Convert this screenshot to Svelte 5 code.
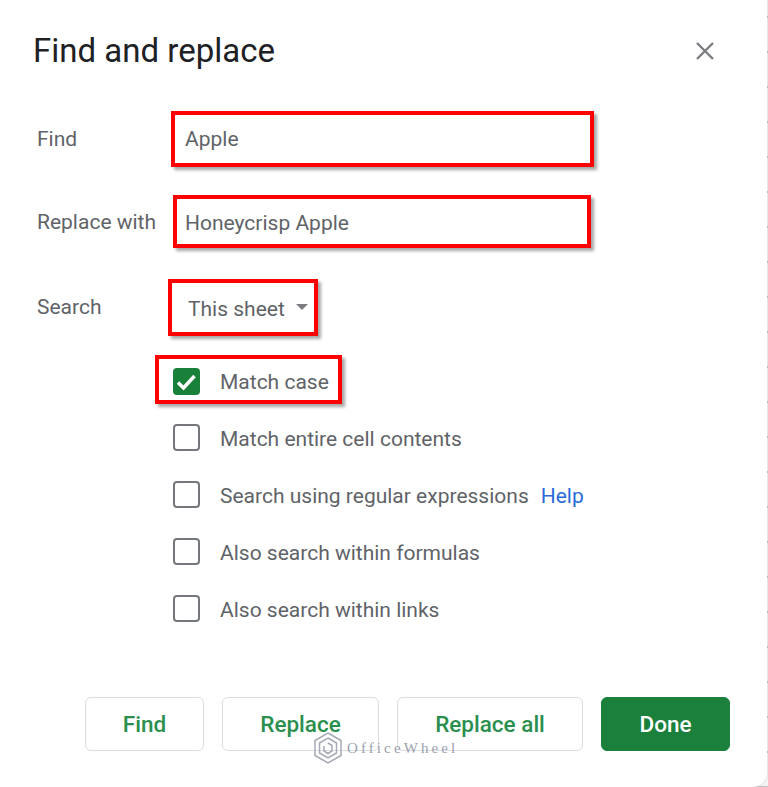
<script>
	const options = [
		{ label: 'Match case', checked: true, marked: true },
		{ label: 'Match entire cell contents' },
		{ label: 'Search using regular expressions', help: true },
		{ label: 'Also search within formulas' },
		{ label: 'Also search within links' }
	];
</script>

<div class="dialog">
	<header class="head">
		<h1>Find and replace</h1>
		<svg class="close" viewBox="0 0 18 18" width="18" height="18" aria-label="Close">
			<path d="M1 1 17 17M17 1 1 17" />
		</svg>
	</header>

	<div class="form">
		<div class="row first">
			<span class="label">Find</span>
			<div class="field find">Apple</div>
		</div>
		<div class="row second">
			<span class="label">Replace with</span>
			<div class="field replace">Honeycrisp Apple</div>
		</div>
		<div class="row third">
			<span class="label">Search</span>
			<div class="select">
				This sheet
				<span class="caret"></span>
			</div>
		</div>
	</div>

	<ul class="options">
		{#each options as opt}
			<li class:marked={opt.marked}>
				<span class="box" class:checked={opt.checked}>
					{#if opt.checked}
						<svg viewBox="0 0 27 27" width="27" height="27">
							<path d="M5 14.500 10.500 20 21.500 8" />
						</svg>
					{/if}
				</span>
				<span class="text">{opt.label}</span>
				{#if opt.help}<a class="help" href="#help">Help</a>{/if}
			</li>
		{/each}
	</ul>

	<footer class="actions">
		<button class="btn b-find">Find</button>
		<button class="btn b-replace">Replace</button>
		<button class="btn b-all">Replace all</button>
		<button class="btn done">Done</button>
	</footer>

	<div class="watermark">
		<svg viewBox="0 0 30 32" width="30" height="32">
			<path d="M15 1 28 8.500V23.500L15 31 2 23.500V8.500Z" />
			<path d="M15 6 23.500 11V21L15 26 6.500 21V11Z" />
			<path d="M15 11 19 13.500V19L15 21.500 11 19V14" />
		</svg>
		<span>OfficeWheel</span>
	</div>
</div>

<style>
	:global(body) {
		margin: 0;
		/* grid rows of the sheet showing behind the dialog */
		background: repeating-linear-gradient(to bottom, #f4f4f4 0 16px, #c4c4c4 16px 18px, #f4f4f4 18px 35px);
	}

	.dialog {
		position: relative;
		box-sizing: border-box;
		width: 767px;
		height: 787px;
		background: #fff;
		border-bottom-right-radius: 14px;
		box-shadow: 0 0 2px rgba(0, 0, 0, 0.2);
		font-family: Roboto, "Liberation Sans", sans-serif;
		color: #5f6368;
		overflow: hidden;
	}

	.head {
		display: flex;
		justify-content: space-between;
		align-items: center;
		padding: 32px 53px 0 33px;
		height: 38px;
	}

	h1 {
		margin: 0;
		font-size: 33px;
		font-weight: 400;
		color: #202124;
		line-height: 38px;
	}

	.close {
		fill: none;
		stroke: #7a7c80;
		stroke-width: 2.4;
	}

	.form {
		padding: 41px 0 0 37px;
	}

	.row {
		display: flex;
		align-items: center;
		font-size: 21px;
	}

	.label {
		width: 134px;
		flex: none;
	}

	.third .label {
		padding-bottom: 2px;
	}

	.field,
	.select {
		box-sizing: border-box;
		border: 4px solid #f00;
		box-shadow: 3px 3px 3px rgba(0, 0, 0, 0.35);
		color: #5f6368;
		display: flex;
		align-items: center;
	}

	.field {
		height: 56px;
		padding-left: 10px;
	}

	.find {
		width: 423px;
	}

	.replace {
		width: 418px;
		height: 53px;
		margin-left: 2px;
		padding-left: 8px;
		padding-top: 2px;
	}

	.second {
		margin-top: 28px;
	}

	.third {
		margin-top: 31px;
	}

	.select {
		width: 150px;
		height: 57px;
		margin-left: -3px;
		padding-left: 16px;
		padding-top: 2px;
	}

	.caret {
		margin-left: 11px;
		margin-top: -3px;
		border-left: 6px solid transparent;
		border-right: 6px solid transparent;
		border-top: 6px solid #7a7c80;
	}

	.options {
		list-style: none;
		margin: 19px 0 0 155px;
		padding: 0;
		font-size: 21px;
	}

	.options li {
		display: flex;
		align-items: center;
		width: 187px;
		height: 51px;
		padding-left: 18px;
		margin-bottom: 6px;
		white-space: nowrap;
	}

	.options li.marked {
		box-sizing: border-box;
		width: 187px;
		height: 49px;
		margin-bottom: 8px;
		border: 4px solid #f00;
		padding: 4px 0 0 14px;
		box-shadow: 3px 3px 3px rgba(0, 0, 0, 0.35);
	}

	.box {
		box-sizing: border-box;
		flex: none;
		width: 27px;
		height: 27px;
		border: 2.500px solid #74777b;
		border-radius: 4px;
		margin-right: 20px;
	}

	.box.checked {
		background: #188038;
		border: none;
	}

	.box svg {
		display: block;
		fill: none;
		stroke: #fff;
		stroke-width: 3.5;
	}

	.text,
	.help {
		padding-top: 2px;
	}

	.marked .text {
		padding-top: 0;
	}

	.help {
		margin-left: 12px;
		color: #2a6bd8;
		text-decoration: none;
	}

	.actions {
		position: absolute;
		left: 85px;
		top: 697px;
		display: flex;
		gap: 18px;
	}

	.btn {
		box-sizing: border-box;
		height: 54px;
		border: 1.500px solid #dadce0;
		border-radius: 6px;
		background: #fff;
		color: #2a8f4e;
		font-family: inherit;
		font-size: 22.5px;
		font-weight: 500;
		padding-bottom: 2px;
	}

	.b-find { width: 119px; }
	.b-replace { width: 157px; }
	.b-all { width: 186px; }

	.done {
		width: 129px;
		background: #1a803c;
		border-color: #1a803c;
		color: #fff;
	}

	.watermark {
		position: absolute;
		left: 313px;
		top: 732px;
		display: flex;
		align-items: center;
		gap: 4px;
		pointer-events: none;
	}

	.watermark svg {
		fill: none;
		stroke: #a5a9b5;
		stroke-width: 1.500;
	}

	.watermark span {
		font-family: "Liberation Serif", serif;
		font-size: 15px;
		letter-spacing: 3.100px;
		color: #9a9fae;
	}
</style>
